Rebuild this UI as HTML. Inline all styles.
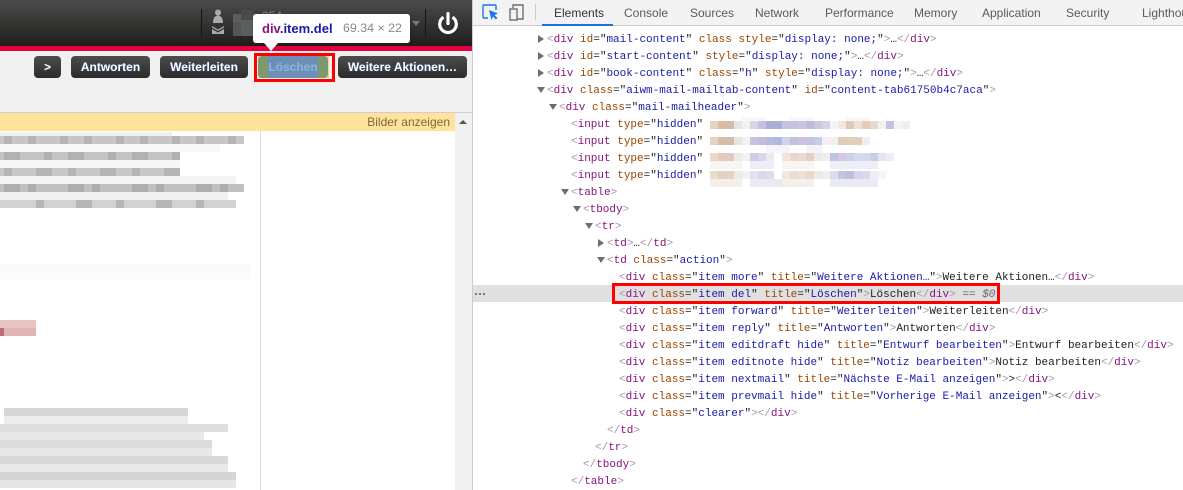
<!DOCTYPE html>
<html><head><meta charset="utf-8"><style>
html,body{margin:0;padding:0;background:#fff}
#r{position:relative;width:1183px;height:490px;overflow:hidden;background:#fff;font-family:"Liberation Sans",sans-serif}
.abs{position:absolute}
.btn{position:absolute;top:56px;height:22px;line-height:22px;border-radius:4px;background:linear-gradient(#4c4c4c,#2c2c2c);color:#fff;font-weight:bold;font-size:12px;text-align:center;text-shadow:0 0 2px rgba(60,90,160,.9)}
.tab{position:absolute;top:0;height:25px;line-height:26px;font-size:12px;color:#5a5a5a;white-space:nowrap}
#code{position:absolute;left:0;top:32px;width:1183px;font:11px/17px "Liberation Mono",monospace;color:#222}
#code div{height:17px;white-space:pre;position:relative}
#code u,#code b,#code i,#code s,#code em{font-weight:normal;font-style:normal;text-decoration:none}
#code u{color:#a894a6}#code b{color:#881280}#code i{color:#994500}#code s{color:#1a1aa6}
.tri{position:absolute;top:3px;width:0;height:0}
.r{border-left:6px solid #6e6e6e;border-top:4px solid transparent;border-bottom:4px solid transparent}
.d{top:4px;border-top:6px solid #6e6e6e;border-left:4px solid transparent;border-right:4px solid transparent}
.m rect{width:8px;height:8px}
</style></head><body><div id="r">

<!-- left page -->
<div class="abs" style="left:0;top:0;width:472px;height:46px;background:linear-gradient(#4b4b4b,#1f1e1c)"></div>
<div class="abs" style="left:0;top:46px;width:472px;height:5px;background:#e4003c"></div>
<div class="abs" style="left:0;top:51px;width:472px;height:61px;background:#f0f0f0"></div>
<div class="abs" style="left:0;top:112px;width:472px;height:1px;background:#cfcfcf"></div>
<div class="abs" style="left:0;top:113px;width:455px;height:18px;background:#ffe29b;color:#7b6b3a;font-size:12px;line-height:18px;text-align:right"><span style="padding-right:5px">Bilder anzeigen</span></div>
<div class="abs" style="left:455px;top:113px;width:17px;height:377px;background:#f0f0f0"></div>
<div class="abs" style="left:459px;top:120px;width:0;height:0;border-left:4px solid transparent;border-right:4px solid transparent;border-bottom:4px solid #555"></div>
<div class="abs" style="left:260px;top:131px;width:1px;height:359px;background:#ddd"></div>

<!-- header items -->
<div class="abs" style="left:201px;top:9px;width:1px;height:28px;background:#161616"></div>
<div class="abs" style="left:425px;top:9px;width:1px;height:28px;background:#161616"></div>
<svg class="abs" style="left:210px;top:8px" width="16" height="28" viewBox="0 0 16 28">
<circle cx="8" cy="4.5" r="3" fill="#aaa"/><path d="M3 15c0-5 2-7.500 5-7.500s5 2.500 5 7.500z" fill="#aaa"/>
<path d="M2 18l6 3.500 6-3.500v1.500l-6 3.500-6-3.500zM2 21l6 3.500 6-3.500v5H2z" fill="#aaa"/></svg>
<svg class="abs" style="left:233px;top:10px" width="30" height="26" shape-rendering="crispEdges"><rect x="0" y="4" width="20" height="22" fill="#5a5e5e"/><rect x="8" y="0" width="12" height="10" fill="#4c4a48"/><rect x="0" y="12" width="8" height="14" fill="#525656"/></svg>
<div class="abs" style="left:262px;top:9px;color:#888;font-size:12px;line-height:14px">354</div>
<div class="abs" style="left:412px;top:21px;width:0;height:0;border-left:4px solid transparent;border-right:4px solid transparent;border-top:5px solid #777"></div>
<svg class="abs" style="left:436px;top:12px" width="24" height="24" viewBox="0 0 24 24" fill="none" stroke="#fff" stroke-width="3.200"><path d="M7.500 5.200a8.300 8.300 0 1 0 9 0"/><path d="M12 1.500v10" stroke-linecap="round"/></svg>

<!-- buttons -->
<div class="btn" style="left:34px;width:27px">&gt;</div>
<div class="btn" style="left:71px;width:79px">Antworten</div>
<div class="btn" style="left:160px;width:88px">Weiterleiten</div>
<div class="abs" style="left:258px;top:56px;width:71px;height:22px;background:#f0cf9f"></div>
<div class="abs" style="left:258px;top:56px;width:70px;height:22px;background:#7d9a6e;border-radius:4px"></div>
<div class="abs" style="left:268px;top:56px;width:50px;height:22px;background:#6b90b8;color:#93b2d8;font:bold 12px/22px 'Liberation Sans',sans-serif;text-align:center">Löschen</div>
<div class="btn" style="left:338px;width:129px">Weitere Aktionen…</div>
<div class="abs" style="left:254px;top:53px;width:75px;height:23px;border:3px solid #f00"></div>

<!-- tooltip -->
<div class="abs" style="left:253px;top:14px;width:157px;height:29px;background:#fff;border-radius:3px;font-size:13px;line-height:29px;white-space:nowrap;box-shadow:0 0 2px rgba(0,0,0,.2)"><span style="position:absolute;left:9px;font-weight:bold;color:#881280">div<span style="color:#1a1aa6">.item.del</span></span><span style="position:absolute;left:90px;color:#888;font-size:12.400px">69.34 × 22</span></div>
<div class="abs" style="left:264px;top:43px;width:0;height:0;border-left:7px solid transparent;border-right:7px solid transparent;border-top:8px solid #fff"></div>

<!-- blurred mail text -->
<svg class="abs" style="left:0;top:131px" width="260" height="359" viewBox="0 131 260 359" shape-rendering="crispEdges">
<rect x="0" y="132" width="172" height="4" fill="#eef0f2"/>
<g stroke-width="8">
<line x1="0" x2="244" y1="140" y2="140" stroke="#c6c6c6"/><line x1="4" x2="244" y1="140" y2="140" stroke="#b4b4b4" stroke-dasharray="8 16 8 24"/>
<line x1="0" x2="220" y1="148" y2="148" stroke="#f8f8f8"/>
<line x1="0" x2="180" y1="156" y2="156" stroke="#c4c4c4"/><line x1="4" x2="180" y1="156" y2="156" stroke="#b2b2b2" stroke-dasharray="16 24 8 16"/>
<line x1="0" x2="180" y1="164" y2="164" stroke="#f7f7f7"/>
<line x1="0" x2="180" y1="172" y2="172" stroke="#c8c8c8"/><line x1="4" x2="180" y1="172" y2="172" stroke="#b4b4b4" stroke-dasharray="8 24 16 16"/>
<line x1="0" x2="236" y1="180" y2="180" stroke="#f5f5f5"/>
<line x1="0" x2="244" y1="188" y2="188" stroke="#c0c0c0"/><line x1="4" x2="244" y1="188" y2="188" stroke="#aeaeae" stroke-dasharray="16 8 8 32"/>
<line x1="0" x2="228" y1="196" y2="196" stroke="#f1f1f1"/>
<line x1="0" x2="236" y1="204" y2="204" stroke="#d2d2d2"/><line x1="36" x2="236" y1="204" y2="204" stroke="#b6b6b6" stroke-dasharray="8 32 16 24"/>
<line x1="0" x2="250" y1="268" y2="268" stroke="#f9f9f9"/><line x1="0" x2="250" y1="276" y2="276" stroke="#fbfbfb"/>
<line x1="0" x2="36" y1="324" y2="324" stroke="#e8c4c0"/><line x1="0" x2="36" y1="332" y2="332" stroke="#e2b4b8"/><line x1="0" x2="4" y1="332" y2="332" stroke="#bf6a78"/>
<line x1="4" x2="188" y1="412" y2="412" stroke="#d6d6d6"/>
<line x1="4" x2="188" y1="420" y2="420" stroke="#ececec"/>
<line x1="0" x2="228" y1="428" y2="428" stroke="#dedede"/>
<line x1="0" x2="204" y1="436" y2="436" stroke="#e8e8e8"/>
<line x1="0" x2="212" y1="444" y2="444" stroke="#dcdcdc"/>
<line x1="0" x2="212" y1="452" y2="452" stroke="#e8e8e8"/>
<line x1="0" x2="228" y1="460" y2="460" stroke="#d9d9d9"/>
<line x1="0" x2="228" y1="468" y2="468" stroke="#e9e9e9"/>
<line x1="0" x2="236" y1="476" y2="476" stroke="#d5d5d5"/>
<line x1="0" x2="236" y1="484" y2="484" stroke="#e6e6e6"/>
</g></svg>

<!-- devtools -->
<div class="abs" style="left:472px;top:0;width:711px;height:25px;background:#f3f3f3;border-bottom:1px solid #ccc"></div>
<div class="abs" style="left:472px;top:0;width:1px;height:490px;background:#ccc"></div>
<svg class="abs" style="left:480px;top:2px" width="50" height="20" viewBox="0 0 50 20" fill="none">
<path d="M8 16H4a1 1 0 0 1-1-1V4a1 1 0 0 1 1-1h11a1 1 0 0 1 1 1v4" stroke="#1a73e8" stroke-width="1.400"/>
<path d="M9 8l9 3.500-3.500 1.500 3 3-1.500 1.500-3-3-1.500 3.500z" fill="#1a73e8"/>
<path d="M33 6V3h10v14H37" stroke="#6e6e6e" stroke-width="1.400"/><rect x="30" y="7" width="7" height="11" stroke="#6e6e6e" stroke-width="1.400"/>
</svg>
<div class="abs" style="left:535px;top:4px;width:1px;height:16px;background:#ccc"></div>
<div class="tab" style="left:554px;color:#333">Elements</div>
<div class="tab" style="left:624px">Console</div>
<div class="tab" style="left:690px">Sources</div>
<div class="tab" style="left:755px">Network</div>
<div class="tab" style="left:825px">Performance</div>
<div class="tab" style="left:914px">Memory</div>
<div class="tab" style="left:982px">Application</div>
<div class="tab" style="left:1066px">Security</div>
<div class="tab" style="left:1142px">Lighthouse</div>
<div class="abs" style="left:542px;top:24px;width:71px;height:2px;background:#1a73e8"></div>

<div class="abs" style="left:473px;top:285px;width:710px;height:17px;background:#e0e0e0"></div>
<div class="abs" style="left:475px;top:293px;width:12px;height:2px;background:repeating-linear-gradient(90deg,#777 0 2px,transparent 2px 4px)"></div>

<svg class="abs m" style="left:710px;top:113px" width="208" height="80" viewBox="0 0 208 80" shape-rendering="crispEdges">
<!-- faint rows -->
<path fill="#f8f8fb" d="M32 4h24v4H32zM80 4h24v4H80zM136 4h24v4h-24z"/>
<path fill="#e9e9f6" d="M56 24h16v-0h-16z"/>
<path fill="#f6f4fa" d="M56 32h24v8H56zM96 32h16v8H96z"/>
<path fill="#f8f5f2" d="M0 48h32v8H0zM72 48h32v8H72z"/>
<path fill="#eeeef8" d="M40 48h24v8H40zM120 48h48v8h-48z"/>
<path fill="#f5efe9" d="M0 66h32v8H0zM72 66h32v8H72z"/>
<path fill="#eaeaf4" d="M40 66h32v8H40zM120 66h48v8h-48z"/>
<!-- row 1 -->
<rect x="0" y="8" fill="#e6d4c2"/><rect x="8" y="8" fill="#d9bda6"/><rect x="16" y="8" fill="#d4bcaa"/><rect x="24" y="8" fill="#e8e4e4"/><rect x="32" y="8" fill="#f2f2f2"/><rect x="40" y="8" fill="#d6d8ea"/><rect x="48" y="8" fill="#c4c2e0"/><rect x="56" y="8" fill="#acaed8"/><rect x="64" y="8" fill="#acaed8"/><rect x="72" y="8" fill="#c8c2e0"/><rect x="80" y="8" fill="#c4c4e2"/><rect x="88" y="8" fill="#cac6e2"/><rect x="96" y="8" fill="#bcbcdc"/><rect x="104" y="8" fill="#ccc8e2"/><rect x="112" y="8" fill="#d4d2e8"/><rect x="120" y="8" fill="#f4f4f6"/><rect x="128" y="8" fill="#f2e8e0"/><rect x="136" y="8" fill="#e0c8b8"/><rect x="144" y="8" fill="#ece2da"/><rect x="152" y="8" fill="#e2cdbc"/><rect x="160" y="8" fill="#e4dad2"/><rect x="168" y="8" fill="#f2f0f0"/><rect x="176" y="8" fill="#c4c4e0"/><rect x="184" y="8" fill="#f4f4f4"/><rect x="192" y="8" fill="#f0eef0"/>
<!-- row 2 -->
<rect x="0" y="24" fill="#e6d4c2"/><rect x="8" y="24" fill="#d9bda6"/><rect x="16" y="24" fill="#d4bcaa"/><rect x="24" y="24" fill="#e8e4e4"/><rect x="32" y="24" fill="#f2f2f2"/><rect x="40" y="24" fill="#c8c4e0"/><rect x="48" y="24" fill="#c4bcdc"/><rect x="56" y="24" fill="#b8bcdc"/><rect x="64" y="24" fill="#acbade"/><rect x="72" y="24" fill="#d0d2e8"/><rect x="80" y="24" fill="#c0c0e0"/><rect x="88" y="24" fill="#ccc0e0"/><rect x="96" y="24" fill="#c4c4e0"/><rect x="104" y="24" fill="#c4cce6"/><rect x="112" y="24" fill="#f2f0f4"/><rect x="120" y="24" fill="#f4f0ea"/><rect x="128" y="24" fill="#e2cdb8"/><rect x="136" y="24" fill="#e0d0bc"/><rect x="144" y="24" fill="#e2cdb8"/><rect x="152" y="24" fill="#f0eef4"/>
<!-- row 3 -->
<rect x="0" y="40" fill="#ead8c8"/><rect x="8" y="40" fill="#e0ccb8"/><rect x="16" y="40" fill="#e0ccc0"/><rect x="24" y="40" fill="#eceaea"/><rect x="32" y="40" fill="#f2f2f2"/><rect x="40" y="40" fill="#d4c8e4"/><rect x="48" y="40" fill="#d8d8ec"/><rect x="56" y="40" fill="#eceaee"/><rect x="72" y="40" fill="#f0e4dc"/><rect x="80" y="40" fill="#e8d8cc"/><rect x="88" y="40" fill="#e8dcd4"/><rect x="96" y="40" fill="#e4d0c4"/><rect x="104" y="40" fill="#eeeaec"/><rect x="112" y="40" fill="#f0eeee"/><rect x="120" y="40" fill="#bcc4e0"/><rect x="128" y="40" fill="#d4c8e4"/><rect x="136" y="40" fill="#ccd0e8"/><rect x="144" y="40" fill="#d4dcec"/><rect x="152" y="40" fill="#d4d8e8"/><rect x="160" y="40" fill="#c8cce8"/><rect x="168" y="40" fill="#e4e4f0"/><rect x="176" y="40" fill="#eeeef0"/>
<!-- row 4 -->
<rect x="0" y="58" fill="#eadccc"/><rect x="8" y="58" fill="#e4d0c0"/><rect x="16" y="58" fill="#e4d4c8"/><rect x="24" y="58" fill="#eceaea"/><rect x="32" y="58" fill="#f2f2f2"/><rect x="40" y="58" fill="#e4e0f0"/><rect x="48" y="58" fill="#d8d8e8"/><rect x="56" y="58" fill="#e0dce8"/><rect x="72" y="58" fill="#f2e8e2"/><rect x="80" y="58" fill="#eadcd0"/><rect x="88" y="58" fill="#ece0da"/><rect x="96" y="58" fill="#e8d8cc"/><rect x="104" y="58" fill="#eeeaec"/><rect x="112" y="58" fill="#f0eef0"/><rect x="120" y="58" fill="#d8e0ec"/><rect x="128" y="58" fill="#c4c4e0"/><rect x="136" y="58" fill="#c0bcdc"/><rect x="144" y="58" fill="#d4d4ec"/><rect x="152" y="58" fill="#dcd8ec"/><rect x="160" y="58" fill="#f0f0f4"/><rect x="168" y="58" fill="#f6f6f8"/>
</svg>

<div id="code">
<div style="padding-left:547px"><span class="tri r" style="left:538px"></span><u>&lt;</u><b>div</b> <i>id</i>="<s>mail-content</s>" <i>class</i> <i>style</i>="<s>display: none;</s>"<u>&gt;</u>…<u>&lt;/</u><b>div</b><u>&gt;</u></div>
<div style="padding-left:547px"><span class="tri r" style="left:538px"></span><u>&lt;</u><b>div</b> <i>id</i>="<s>start-content</s>" <i>style</i>="<s>display: none;</s>"<u>&gt;</u>…<u>&lt;/</u><b>div</b><u>&gt;</u></div>
<div style="padding-left:547px"><span class="tri r" style="left:538px"></span><u>&lt;</u><b>div</b> <i>id</i>="<s>book-content</s>" <i>class</i>="<s>h</s>" <i>style</i>="<s>display: none;</s>"<u>&gt;</u>…<u>&lt;/</u><b>div</b><u>&gt;</u></div>
<div style="padding-left:547px"><span class="tri d" style="left:537px"></span><u>&lt;</u><b>div</b> <i>class</i>="<s>aiwm-mail-mailtab-content</s>" <i>id</i>="<s>content-tab61750b4c7aca</s>"<u>&gt;</u></div>
<div style="padding-left:559px"><span class="tri d" style="left:549px"></span><u>&lt;</u><b>div</b> <i>class</i>="<s>mail-mailheader</s>"<u>&gt;</u></div>
<div style="padding-left:571px"><u>&lt;</u><b>input</b> <i>type</i>="<s>hidden</s>"</div>
<div style="padding-left:571px"><u>&lt;</u><b>input</b> <i>type</i>="<s>hidden</s>"</div>
<div style="padding-left:571px"><u>&lt;</u><b>input</b> <i>type</i>="<s>hidden</s>"</div>
<div style="padding-left:571px"><u>&lt;</u><b>input</b> <i>type</i>="<s>hidden</s>"</div>
<div style="padding-left:571px"><span class="tri d" style="left:561px"></span><u>&lt;</u><b>table</b><u>&gt;</u></div>
<div style="padding-left:583px"><span class="tri d" style="left:573px"></span><u>&lt;</u><b>tbody</b><u>&gt;</u></div>
<div style="padding-left:595px"><span class="tri d" style="left:585px"></span><u>&lt;</u><b>tr</b><u>&gt;</u></div>
<div style="padding-left:607px"><span class="tri r" style="left:598px"></span><u>&lt;</u><b>td</b><u>&gt;</u>…<u>&lt;/</u><b>td</b><u>&gt;</u></div>
<div style="padding-left:607px"><span class="tri d" style="left:597px"></span><u>&lt;</u><b>td</b> <i>class</i>="<s>action</s>"<u>&gt;</u></div>
<div style="padding-left:619px"><u>&lt;</u><b>div</b> <i>class</i>="<s>item more</s>" <i>title</i>="<s>Weitere Aktionen…</s>"<u>&gt;</u>Weitere Aktionen…<u>&lt;/</u><b>div</b><u>&gt;</u></div>
<div style="padding-left:619px"><u>&lt;</u><b>div</b> <i>class</i>="<s>item del</s>" <i>title</i>="<s>Löschen</s>"<u>&gt;</u>Löschen<u>&lt;/</u><b>div</b><u>&gt;</u> <span style="color:#666">== <em style="font-style:italic">$0</em></span></div>
<div style="padding-left:619px"><u>&lt;</u><b>div</b> <i>class</i>="<s>item forward</s>" <i>title</i>="<s>Weiterleiten</s>"<u>&gt;</u>Weiterleiten<u>&lt;/</u><b>div</b><u>&gt;</u></div>
<div style="padding-left:619px"><u>&lt;</u><b>div</b> <i>class</i>="<s>item reply</s>" <i>title</i>="<s>Antworten</s>"<u>&gt;</u>Antworten<u>&lt;/</u><b>div</b><u>&gt;</u></div>
<div style="padding-left:619px"><u>&lt;</u><b>div</b> <i>class</i>="<s>item editdraft hide</s>" <i>title</i>="<s>Entwurf bearbeiten</s>"<u>&gt;</u>Entwurf bearbeiten<u>&lt;/</u><b>div</b><u>&gt;</u></div>
<div style="padding-left:619px"><u>&lt;</u><b>div</b> <i>class</i>="<s>item editnote hide</s>" <i>title</i>="<s>Notiz bearbeiten</s>"<u>&gt;</u>Notiz bearbeiten<u>&lt;/</u><b>div</b><u>&gt;</u></div>
<div style="padding-left:619px"><u>&lt;</u><b>div</b> <i>class</i>="<s>item nextmail</s>" <i>title</i>="<s>Nächste E-Mail anzeigen</s>"<u>&gt;</u>&gt;<u>&lt;/</u><b>div</b><u>&gt;</u></div>
<div style="padding-left:619px"><u>&lt;</u><b>div</b> <i>class</i>="<s>item prevmail hide</s>" <i>title</i>="<s>Vorherige E-Mail anzeigen</s>"<u>&gt;</u>&lt;<u>&lt;/</u><b>div</b><u>&gt;</u></div>
<div style="padding-left:619px"><u>&lt;</u><b>div</b> <i>class</i>="<s>clearer</s>"<u>&gt;</u><u>&lt;/</u><b>div</b><u>&gt;</u></div>
<div style="padding-left:607px"><u>&lt;/</u><b>td</b><u>&gt;</u></div>
<div style="padding-left:595px"><u>&lt;/</u><b>tr</b><u>&gt;</u></div>
<div style="padding-left:583px"><u>&lt;/</u><b>tbody</b><u>&gt;</u></div>
<div style="padding-left:571px"><u>&lt;/</u><b>table</b><u>&gt;</u></div>
</div>
<div class="abs" style="left:612px;top:283px;width:382px;height:15px;border:3px solid #f00"></div>
</div></body></html>
